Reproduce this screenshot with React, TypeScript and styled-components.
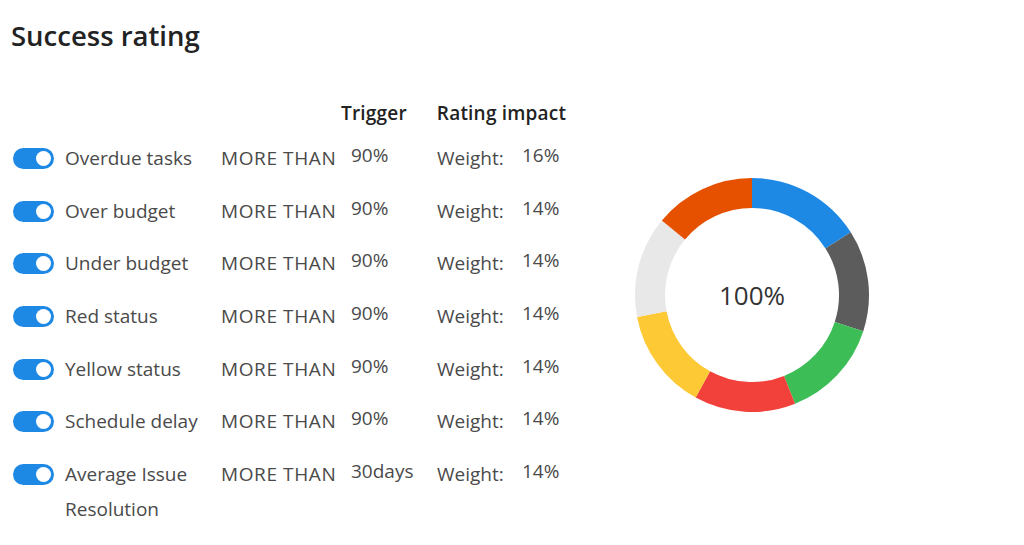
import styled, { createGlobalStyle } from "styled-components";

const GlobalStyle = createGlobalStyle`
    html, body {
        margin: 0;
        padding: 0;
        background: #ffffff;
    }
    body {
        font-family: "Open Sans", "Noto Sans", sans-serif;
        color: #444444;
    }
`;

type Rule = {
    name: string[];
    trigger: string;
    weight: number;
};

const rules: Rule[] = [
    { name: ["Overdue tasks"], trigger: "90%", weight: 16 },
    { name: ["Over budget"], trigger: "90%", weight: 14 },
    { name: ["Under budget"], trigger: "90%", weight: 14 },
    { name: ["Red status"], trigger: "90%", weight: 14 },
    { name: ["Yellow status"], trigger: "90%", weight: 14 },
    { name: ["Schedule delay"], trigger: "90%", weight: 14 },
    { name: ["Average Issue", "Resolution"], trigger: "30days", weight: 14 },
];

// donut slices, clockwise from 12 o'clock
const slices = [
    { value: 16, color: "#1e88e5" },
    { value: 14, color: "#5c5c5c" },
    { value: 14, color: "#3dbd55" },
    { value: 14, color: "#f2413a" },
    { value: 14, color: "#fdc935" },
    { value: 14, color: "#e8e8e8" },
    { value: 14, color: "#e65100" },
];

const Donut = () => {
    const size = 236;
    const c = size / 2;
    const outer = 117;
    const inner = 87;
    const total = slices.reduce((s, x) => s + x.value, 0);
    const point = (r: number, a: number) => [c + r * Math.sin(a), c - r * Math.cos(a)];
    let start = 0;
    return (
        <ChartWrap>
            <svg width={size} height={size} viewBox={`0 0 ${size} ${size}`}>
                {slices.map((s, i) => {
                    const end = start + (s.value / total) * Math.PI * 2;
                    const large = end - start > Math.PI ? 1 : 0;
                    const [x1, y1] = point(outer, start);
                    const [x2, y2] = point(outer, end);
                    const [x3, y3] = point(inner, end);
                    const [x4, y4] = point(inner, start);
                    const d = `M${x1} ${y1} A${outer} ${outer} 0 ${large} 1 ${x2} ${y2} L${x3} ${y3} A${inner} ${inner} 0 ${large} 0 ${x4} ${y4} Z`;
                    start = end;
                    return <path key={i} d={d} fill={s.color} />;
                })}
            </svg>
            <ChartLabel>100%</ChartLabel>
        </ChartWrap>
    );
};

export default function App() {
    return (
        <Page>
            <GlobalStyle />
            <Title>Success rating</Title>
            <Content>
                <Table>
                    <HeaderRow>
                        <HeadCell>Trigger</HeadCell>
                        <HeadCell>Rating impact</HeadCell>
                    </HeaderRow>
                    {rules.map((r) => (
                        <Row key={r.name[0]}>
                            <Toggle>
                                <Knob />
                            </Toggle>
                            <Label>
                                {r.name.map((line) => (
                                    <div key={line}>{line}</div>
                                ))}
                            </Label>
                            <Operator>MORE THAN</Operator>
                            <Value>{r.trigger}</Value>
                            <Label>Weight:</Label>
                            <Value>{r.weight}%</Value>
                        </Row>
                    ))}
                </Table>
                <Donut />
            </Content>
        </Page>
    );
}

const Page = styled.div`
    padding: 15px 0 0 11px;
    width: 1024px;
    height: 545px;
    box-sizing: border-box;
    overflow: hidden;
`;

const Title = styled.h1`
    margin: 0;
    font-size: 27.5px;
    font-weight: 600;
    color: #222222;
    line-height: 42px;
`;

const Content = styled.div`
    display: flex;
    align-items: flex-start;
    margin-top: 40px;
`;

const Table = styled.div`
    display: flex;
    flex-direction: column;
    width: 610px;
    padding-left: 2px;
`;

const HeaderRow = styled.div`
    display: flex;
    gap: 30px;
    padding-left: 328px;
    margin-bottom: 12px;
`;

const HeadCell = styled.div`
    font-size: 19px;
    font-weight: 600;
    color: #222222;
    line-height: 32px;
    letter-spacing: 0.2px;
`;

const Row = styled.div`
    display: grid;
    grid-template-columns: 52px 156px 130px 86px 85px auto;
    align-items: start;
    height: 52.7px;
    font-size: 19px;
    line-height: 35px;
    color: #4a4a4a;
`;

const Toggle = styled.div`
    width: 41px;
    height: 21px;
    margin-top: 7px;
    border-radius: 11px;
    background: #1e88e5;
    display: flex;
    align-items: center;
    justify-content: flex-end;
    padding-right: 3px;
    box-sizing: border-box;
`;

const Knob = styled.div`
    width: 15px;
    height: 15px;
    border-radius: 50%;
    background: #ffffff;
`;

const Label = styled.div`
    white-space: nowrap;
`;

const Operator = styled.div`
    white-space: nowrap;
    letter-spacing: 0.6px;
`;

const Value = styled.div`
    margin-top: -3px;
`;

const ChartWrap = styled.div`
    position: relative;
    width: 236px;
    height: 236px;
    margin-top: 80px;
    margin-left: 11px;
`;

const ChartLabel = styled.div`
    position: absolute;
    inset: 0;
    display: flex;
    align-items: center;
    justify-content: center;
    font-size: 26px;
    color: #333333;
`;
